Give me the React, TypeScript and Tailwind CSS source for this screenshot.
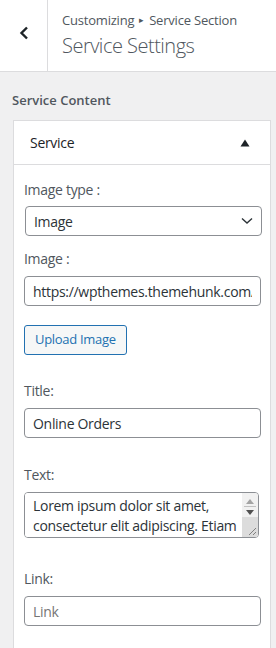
import { useState } from "react";

export default function App() {
  const [imageType, setImageType] = useState("image");
  const [imageUrl, setImageUrl] = useState("https://wpthemes.themehunk.com/wp-content/uploads/service.png");
  const [title, setTitle] = useState("Online Orders");
  const [text, setText] = useState(
    "Lorem ipsum dolor sit amet, consectetur elit adipiscing. Etiam a lorem in nisl cursus vehicula sed sit amet mauris."
  );
  const [link, setLink] = useState("");

  const field =
    "block w-full h-[30px] rounded-[4px] border border-[#8c8f94] bg-white px-[8px] text-[14px] text-[#2c3338] outline-none";

  return (
    <div className="min-h-[648px] bg-[#f0f0f1] font-['Open_Sans',sans-serif] text-[#50575e]">
      {/* Header */}
      <header className="flex h-[72px] bg-white border-b border-[#dcdcde]">
        <button className="flex w-[48px] shrink-0 items-center justify-center border-r border-[#dcdcde] pb-[6px]">
          <svg width="10" height="14" viewBox="0 0 10 14">
            <polyline points="8,1.5 2.5,7 8,12.5" fill="none" stroke="#1d2327" strokeWidth="2.4" />
          </svg>
        </button>
        <div className="pl-[14px] pt-[9px]">
          <div className="flex items-center text-[13px] leading-[22px] tracking-[-0.2px]">
            <span>Customizing</span>
            <span className="mx-[5px] text-[9px]">▸</span>
            <span>Service Section</span>
          </div>
          <div className="text-[20px] font-light leading-[30px] tracking-[-0.5px]">Service Settings</div>
        </div>
      </header>

      {/* Section title */}
      <div className="px-[12px] pt-[18px] pb-[10px] text-[13px] font-semibold leading-[20px]">
        Service Content
      </div>

      {/* Card */}
      <div className="ml-[13px] mr-[5px] min-h-[529px] border border-b-0 border-[#dcdcde] bg-white">
        <div className="flex h-[44px] items-center justify-between border-b border-[#dcdcde] pl-[16px] pr-[20px]">
          <span className="text-[14px] text-[#1d2327] tracking-[-0.3px]">Service</span>
          <svg width="10" height="8" viewBox="0 0 10 8">
            <polygon points="5,0.5 9.5,7.5 0.5,7.5" fill="#1d2327" />
          </svg>
        </div>

        <div className="pl-[10px] pr-[9px] pt-[15px] text-[14px] tracking-[-0.3px]">
          <label className="block leading-[20px]">Image type :</label>
          <div className="relative mt-[6px]">
            <select
              value={imageType}
              onChange={(e) => setImageType(e.target.value)}
              className={field + " appearance-none pl-[8px] ml-[1px]"}
            >
              <option value="image">Image</option>
              <option value="icon">Icon</option>
            </select>
            <svg className="pointer-events-none absolute right-[8px] top-[11px]" width="12" height="8" viewBox="0 0 12 8">
              <polyline points="1,1.5 6,6 11,1.5" fill="none" stroke="#2c3338" strokeWidth="1.4" />
            </svg>
          </div>

          <label className="mt-[13px] block leading-[20px]">Image :</label>
          <input className={field + " mt-[7px]"} value={imageUrl} onChange={(e) => setImageUrl(e.target.value)} />

          <button className="mt-[19px] h-[30px] rounded-[3px] border border-[#2271b1] bg-[#f6f7f7] px-[10px] text-[13px] text-[#2271b1]">
            Upload Image
          </button>

          <label className="mt-[26px] block leading-[20px]">Title:</label>
          <input className={field + " mt-[7px]"} value={title} onChange={(e) => setTitle(e.target.value)} />

          <label className="mt-[27px] block leading-[20px]">Text:</label>
          <div className="mt-[7px] flex h-[46px] w-[235px] overflow-hidden rounded-[4px] border border-[#8c8f94] bg-white">
            <textarea
              className="min-w-0 flex-1 resize-none overflow-hidden bg-white pl-[8px] pr-[4px] py-[3px] text-[14px] leading-[20px] text-[#2c3338] outline-none"
              value={text}
              onChange={(e) => setText(e.target.value)}
            />
            {/* classic scrollbar */}
            <div className="flex w-[16px] shrink-0 flex-col bg-[#f1f1f1]">
              <div className="flex h-[13px] items-end justify-center pb-[2px]">
                <svg width="8" height="5" viewBox="0 0 8 5">
                  <polygon points="4,0 8,5 0,5" fill="#a3a3a3" />
                </svg>
              </div>
              <div className="mx-[2px] h-px bg-[#c1c1c1]" />
              <div className="flex h-[10px] items-center justify-center">
                <svg width="8" height="5" viewBox="0 0 8 5">
                  <polygon points="0,0 8,0 4,5" fill="#505050" />
                </svg>
              </div>
              <div className="flex flex-1 items-end justify-end bg-[#dcdcdc] p-[1px]">
                <svg width="10" height="10" viewBox="0 0 10 10">
                  <line x1="9" y1="2" x2="2" y2="9" stroke="#808080" strokeWidth="1" />
                  <line x1="9" y1="6" x2="6" y2="9" stroke="#808080" strokeWidth="1" />
                </svg>
              </div>
            </div>
          </div>

          <label className="mt-[31px] block leading-[20px]">Link:</label>
          <input
            className={field + " mt-[7px] placeholder:text-[#757575]"}
            placeholder="Link"
            value={link}
            onChange={(e) => setLink(e.target.value)}
          />
        </div>
      </div>
    </div>
  );
}
